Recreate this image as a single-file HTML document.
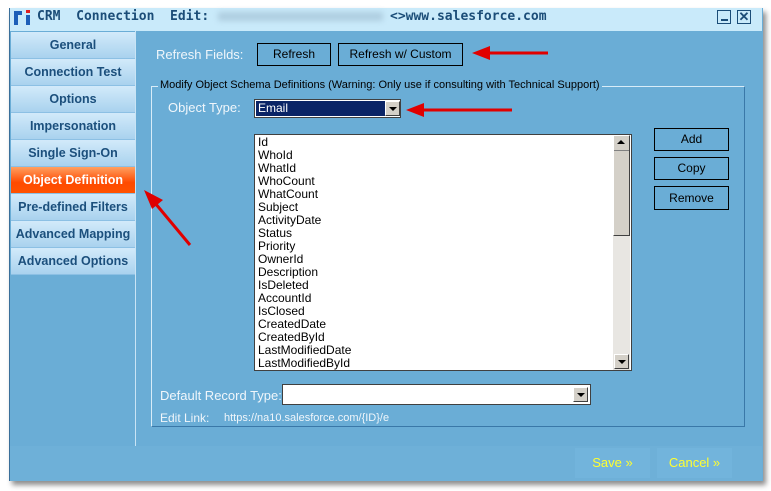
<!DOCTYPE html>
<html><head><style>
body{margin:0;width:771px;height:491px;background:#fff;position:relative;overflow:hidden;font-family:"Liberation Sans",sans-serif;}
.a{position:absolute;}
#win{left:9px;top:8px;width:753px;height:473px;background:#6aadd6;box-shadow:3px 4px 5px rgba(0,0,0,.45);border-left:1px solid #3a6f9a;}
#title{left:10px;top:8px;width:752px;height:23px;background:#c9eafa;}
.tt{font-family:"DejaVu Sans Mono","Liberation Mono",monospace;font-weight:bold;font-size:13px;color:#1b4d78;}
.nav{left:11px;width:124px;height:26px;background:linear-gradient(#d2eafa,#a9d2ee);border-bottom:1px solid #8cc0e4;color:#1b4f7c;font-weight:bold;font-size:12.5px;text-align:center;line-height:26px;}
.nav.on{background:linear-gradient(#ffa060,#ff4a00 60%,#ff5200);color:#fff;}
.btn{border:1px solid #000;background:#6aadd6;font-size:12px;text-align:center;color:#000;box-sizing:border-box;}
.lbl{color:#f0f6fb;font-size:13px;}
.list div{height:13px;line-height:13px;font-size:12px;}
.dd{width:15px;height:15px;background:#d4d0c8;border:1px solid;border-color:#fff #404040 #404040 #fff;box-sizing:border-box;}
.dd:after{content:"";position:absolute;left:3px;top:5px;border:4px solid transparent;border-top:4px solid #000;border-bottom:0;}
</style></head><body>
<div id="win" class="a"></div>
<div id="title" class="a"></div>
<div class="a" style="left:14px;top:11px;width:4px;height:14px;background:#1d5fb8"></div>
<div class="a" style="left:14px;top:11px;width:8px;height:4px;background:#1d5fb8;border-radius:4px 0 0 0"></div>
<div class="a" style="left:26px;top:10px;width:4px;height:3px;background:#e02020"></div>
<div class="a" style="left:26px;top:15px;width:4px;height:10px;background:#1d5fb8"></div>
<div class="a tt" style="left:37px;top:8px;line-height:18px;">CRM&nbsp;&nbsp;Connection&nbsp;&nbsp;Edit:</div>
<div class="a" style="left:218px;top:12px;width:165px;height:9px;background:#a9c7da;filter:blur(3px);opacity:.8"></div>
<div class="a tt" style="left:390px;top:8px;line-height:18px;">&lt;&gt;www.salesforce.com</div>
<div class="a" style="left:717px;top:10px;width:14px;height:14px;border:1px solid #1b4d78;box-sizing:border-box;"><div class="a" style="left:3px;top:8px;width:7px;height:2px;background:#1b4d78"></div></div>
<div class="a" style="left:737px;top:10px;width:14px;height:14px;border:1px solid #1b4d78;box-sizing:border-box;color:#1b4d78;font-weight:bold;font-size:13px;line-height:11px;text-align:center">✕</div>

<div class="a" style="left:10px;top:31px;width:125px;height:418px;background:#6aadd6"></div>
<div class="a" style="left:135px;top:31px;width:1px;height:415px;background:#c9e4f5"></div>
<div class="a nav" style="top:32px">General</div>
<div class="a nav" style="top:59px">Connection Test</div>
<div class="a nav" style="top:86px">Options</div>
<div class="a nav" style="top:113px">Impersonation</div>
<div class="a nav" style="top:140px">Single Sign-On</div>
<div class="a nav on" style="top:167px">Object Definition</div>
<div class="a nav" style="top:194px">Pre-defined Filters</div>
<div class="a nav" style="top:221px">Advanced Mapping</div>
<div class="a nav" style="top:248px">Advanced Options</div>

<div class="a lbl" style="left:156px;top:47px">Refresh Fields:</div>
<div class="a btn" style="left:257px;top:43px;width:74px;height:23px;line-height:21px">Refresh</div>
<div class="a btn" style="left:338px;top:43px;width:125px;height:23px;line-height:21px">Refresh w/ Custom</div>

<div class="a" style="left:151px;top:86px;width:594px;height:341px;border:1px solid #d8ecf8;border-right-color:#3a78a8;border-bottom-color:#3a78a8;box-sizing:border-box"></div>
<div class="a" style="left:158px;top:79px;background:#6aadd6;padding:0 2px;font-size:11px;color:#000;">Modify Object Schema Definitions (Warning: Only use if consulting with Technical Support)</div>
<div class="a lbl" style="left:168px;top:100px">Object Type:</div>
<div class="a" style="left:254px;top:99px;width:147px;height:19px;background:#fff;border:1px solid #404040;box-sizing:border-box;">
<div class="a" style="left:1px;top:1px;width:128px;height:15px;background:#0a2466;color:#fff;font-size:12px;line-height:15px;padding-left:2px">Email</div>
<div class="a dd" style="left:130px;top:1px"></div></div>

<div class="a list" style="left:254px;top:134px;width:378px;height:237px;background:#fff;border:1px solid #404040;box-sizing:border-box;padding:1px 0 0 3px;overflow:hidden">
<div>Id</div><div>WhoId</div><div>WhatId</div><div>WhoCount</div><div>WhatCount</div><div>Subject</div><div>ActivityDate</div><div>Status</div><div>Priority</div><div>OwnerId</div><div>Description</div><div>IsDeleted</div><div>AccountId</div><div>IsClosed</div><div>CreatedDate</div><div>CreatedById</div><div>LastModifiedDate</div><div>LastModifiedById</div>
</div>
<div class="a" style="left:613px;top:135px;width:17px;height:235px;background:#e8e6e2"></div>
<div class="a" style="left:613px;top:135px;width:17px;height:101px;background:#d4d0c8;border:1px solid;border-color:#fff #404040 #404040 #fff;box-sizing:border-box"></div>
<div class="a" style="left:614px;top:136px;width:15px;height:14px;background:#d4d0c8;border-bottom:1px solid #808080"><div class="a" style="left:3px;top:4px;border:4px solid transparent;border-bottom:4px solid #000;border-top:0"></div></div>
<div class="a" style="left:614px;top:354px;width:15px;height:15px;background:#d4d0c8;border:1px solid;border-color:#fff #404040 #404040 #fff;box-sizing:border-box"><div class="a" style="left:3px;top:5px;border:4px solid transparent;border-top:4px solid #000;border-bottom:0"></div></div>

<div class="a btn" style="left:654px;top:128px;width:75px;height:23px;line-height:21px">Add</div>
<div class="a btn" style="left:654px;top:157px;width:75px;height:23px;line-height:21px">Copy</div>
<div class="a btn" style="left:654px;top:186px;width:75px;height:24px;line-height:22px">Remove</div>

<div class="a lbl" style="left:160px;top:388px">Default Record Type:</div>
<div class="a" style="left:282px;top:384px;width:309px;height:21px;background:#fff;border:1px solid #404040;box-sizing:border-box"><div class="a dd" style="left:290px;top:2px"></div></div>
<div class="a lbl" style="left:160px;top:411px;font-size:12px">Edit Link:</div>
<div class="a" style="left:224px;top:412px;font-size:11px;color:#f0f6fb">https://na10.salesforce.com/{ID}/e</div>

<div class="a" style="left:10px;top:446px;width:752px;height:35px;background:#6eb0d8"></div>
<div class="a" style="left:575px;top:448px;width:75px;height:30px;background:#72b4dc;color:#ffff30;font-size:13px;line-height:30px;text-align:center">Save »</div>
<div class="a" style="left:657px;top:448px;width:75px;height:30px;background:#72b4dc;color:#ffff30;font-size:13px;line-height:30px;text-align:center">Cancel »</div>

<svg class="a" style="left:0;top:0" width="771" height="491">
<g stroke="#e00000" stroke-width="3" fill="#e00000">
<line x1="548" y1="53" x2="485" y2="53"/><polygon points="472,53 490,46 490,60" stroke="none"/>
<line x1="512" y1="110" x2="420" y2="110"/><polygon points="406,110 424,103 424,117" stroke="none"/>
<line x1="190" y1="245" x2="155" y2="203"/><polygon points="144,190 163,200 152,209" stroke="none"/>
</g></svg>
</body></html>
